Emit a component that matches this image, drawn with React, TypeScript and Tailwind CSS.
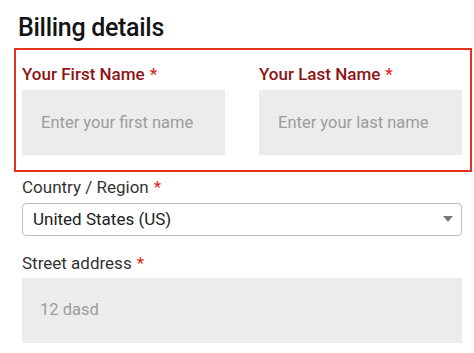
import React from "react";

const font = { fontFamily: 'Roboto, "Noto Sans", sans-serif' };

function Req() {
  return <span className="text-[#e0261b] ml-[5px]">*</span>;
}

export default function App() {
  return (
    <div className="w-[474px] h-[353px] overflow-hidden bg-white" style={font}>
      <div className="pl-[22px] pr-[12px]">
        <h3 className="pt-[11px] -ml-[4px] text-[25px] leading-[34px] font-medium tracking-[-0.3px] text-[#141414]">
          Billing details
        </h3>

        {/* highlighted name row */}
        <div className="mt-[3px] -ml-[8px] -mr-[10px] border-2 border-[#e4321f] pl-[6px] pr-[8px] pt-[12px] pb-[15px] grid grid-cols-2 gap-x-[34px]">
          <div>
            <label className="block text-[17px] leading-[24px] font-medium text-[#8c1616]">
              Your First Name<Req />
            </label>
            <input
              className="mt-[4px] w-full h-[65px] bg-[#ececec] px-[19px] text-[16.5px] text-[#333] placeholder:text-[#9c9c9c] outline-none"
              placeholder="Enter your first name"
            />
          </div>
          <div>
            <label className="block text-[17px] leading-[24px] font-medium text-[#8c1616]">
              Your Last Name<Req />
            </label>
            <input
              className="mt-[4px] w-full h-[65px] bg-[#ececec] px-[19px] text-[16.5px] text-[#333] placeholder:text-[#9c9c9c] outline-none"
              placeholder="Enter your last name"
            />
          </div>
        </div>

        <div className="mt-[3px]">
          <label className="block text-[17px] leading-[24px] text-[#333]">
            Country / Region<Req />
          </label>
          <div className="mt-[4px] h-[33px] rounded-[4px] border border-[#bdbdbd] flex items-center justify-between pl-[10px] pr-[7px]">
            <span className="text-[17px] text-[#222]">United States (US)</span>
            <svg width="10" height="7" viewBox="0 0 10 7" className="mr-[1px]">
              <path d="M0 0 H10 L5 6 Z" fill="#777" />
            </svg>
          </div>
        </div>

        <div className="mt-[15px]">
          <label className="block text-[17px] leading-[24px] text-[#333]">
            Street address<Req />
          </label>
          <div className="mt-[3px] h-[65px] bg-[#ececec] flex items-center px-[18px] text-[16.5px] text-[#9c9c9c]">
            12 dasd
          </div>
        </div>
      </div>
    </div>
  );
}
